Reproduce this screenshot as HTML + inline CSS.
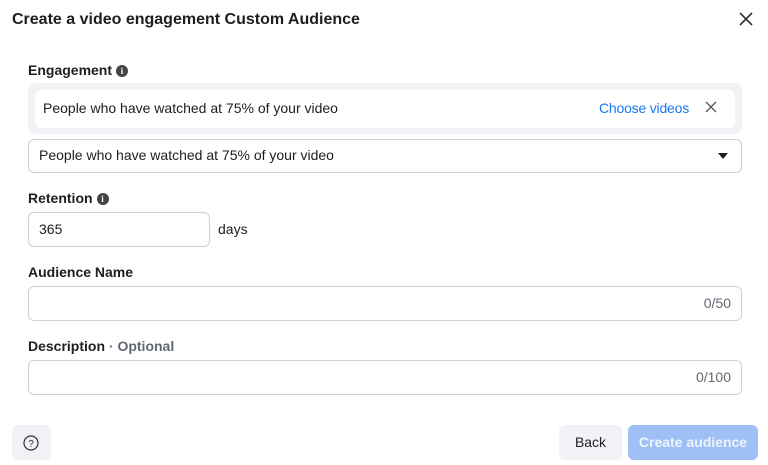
<!DOCTYPE html><html><head><style>
body{margin:0;width:768px;height:465px;background:#fff;font-family:"Liberation Sans",sans-serif;color:#1c1e21;position:relative;overflow:hidden}
.a{position:absolute}
.t{left:12px;top:11px;font-size:16px;font-weight:bold;color:#1c1e21}
.l{font-size:14px;font-weight:bold;left:28px}
.i{display:inline-block;width:12px;height:12px;border-radius:50%;background:#444;color:#fff;font-size:9px;text-align:center;line-height:12px;vertical-align:1px;margin-left:4px;font-family:"Liberation Serif",serif;font-weight:bold}
.box{border:1px solid #ccd0d5;border-radius:6px;background:#fff;box-sizing:border-box}
.tx{font-size:14px}
.c{font-size:14px;color:#606770}
</style></head><body>
<div class="a t">Create a video engagement Custom Audience</div>
<svg class="a" style="left:739px;top:12px" width="14" height="14"><path d="M1 1L13 13M13 1L1 13" stroke="#333" stroke-width="1.6"/></svg>
<div class="a l" style="top:62px">Engagement<span class="i">i</span></div>
<div class="a" style="left:28px;top:83px;width:714px;height:51px;background:#f0f2f5;border-radius:8px"></div>
<div class="a" style="left:35px;top:90px;width:700px;height:38px;background:#fff;border-radius:6px"></div>
<div class="a tx" style="left:43px;top:100px">People who have watched at 75% of your video</div>
<div class="a tx" style="left:599px;top:100px;color:#1877f2;letter-spacing:-0.2px">Choose videos</div>
<svg class="a" style="left:705px;top:101px" width="12" height="12"><path d="M1 1L11 11M11 1L1 11" stroke="#555" stroke-width="1.3"/></svg>
<div class="a box" style="left:28px;top:139px;width:714px;height:34px"></div>
<div class="a tx" style="left:39px;top:147px">People who have watched at 75% of your video</div>
<svg class="a" style="left:718px;top:153px" width="10" height="6"><path d="M0 0H10L5 6Z" fill="#1c1e21"/></svg>
<div class="a l" style="top:190px">Retention<span class="i">i</span></div>
<div class="a box" style="left:28px;top:212px;width:182px;height:35px"></div>
<div class="a tx" style="left:39px;top:221px">365</div>
<div class="a tx" style="left:218px;top:221px">days</div>
<div class="a l" style="top:264px">Audience Name</div>
<div class="a box" style="left:28px;top:286px;width:714px;height:35px"></div>
<div class="a c" style="right:37px;top:295px">0/50</div>
<div class="a l" style="top:338px">Description <span style="color:#606770">· Optional</span></div>
<div class="a box" style="left:28px;top:360px;width:714px;height:35px"></div>
<div class="a c" style="right:37px;top:369px">0/100</div>
<div class="a" style="left:12px;top:425px;width:39px;height:35px;background:#f0f2f5;border-radius:6px"></div>
<svg class="a" style="left:23px;top:435px" width="16" height="16"><circle cx="8" cy="8" r="7" fill="none" stroke="#333" stroke-width="1.2"/><text x="8" y="12" font-size="10" text-anchor="middle" font-family="Liberation Sans" fill="#333">?</text></svg>
<div class="a" style="left:559px;top:425px;width:63px;height:35px;background:#f0f2f5;border-radius:6px;font-size:14px;text-align:center;line-height:35px">Back</div>
<div class="a" style="left:628px;top:425px;width:130px;height:35px;background:#9fc0f5;border-radius:6px;font-size:14px;font-weight:bold;color:#eef4fe;text-align:center;line-height:35px">Create audience</div>
</body></html>
